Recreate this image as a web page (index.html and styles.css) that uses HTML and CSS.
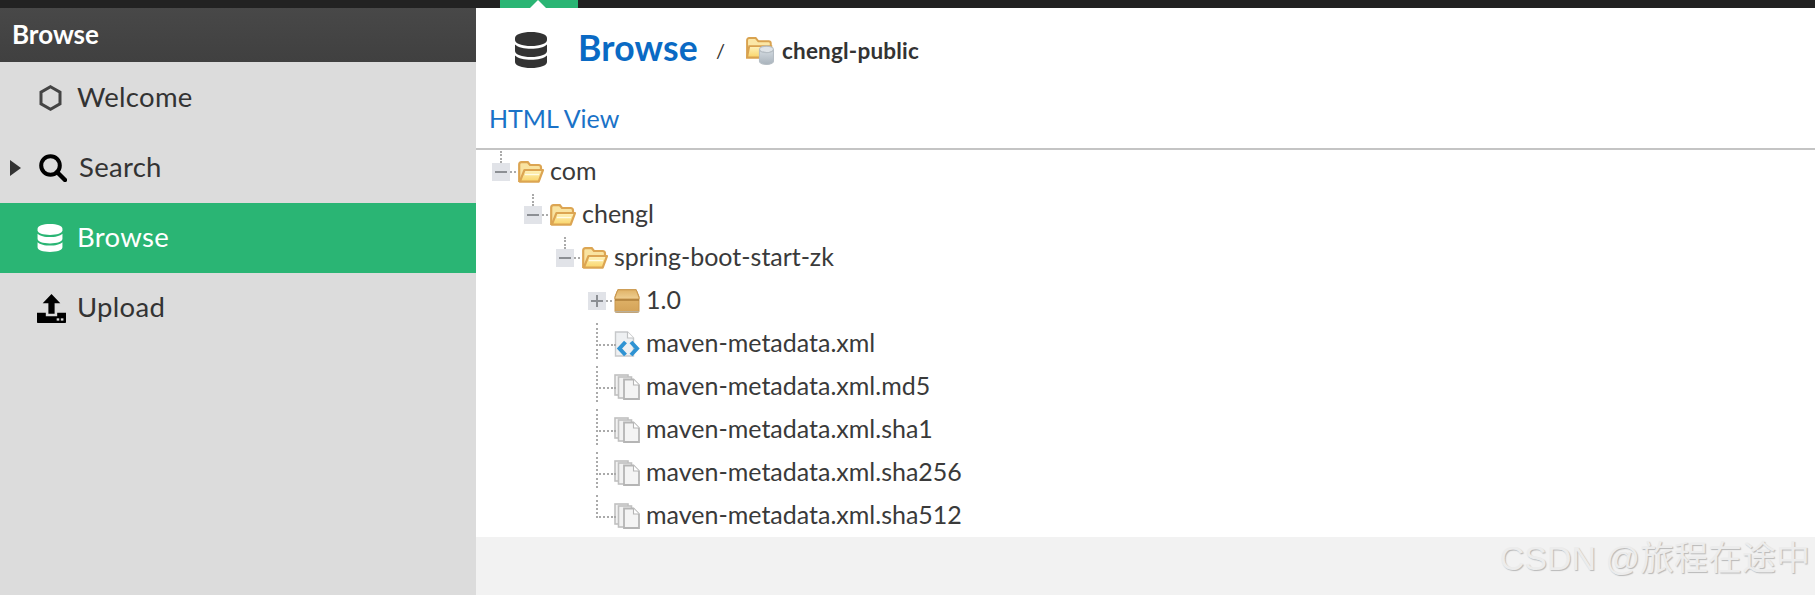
FILE: index.html
```html
<!DOCTYPE html>
<html lang="en">
<head>
<meta charset="utf-8">
<title>Browse</title>
<link rel="stylesheet" href="styles.css">
</head>
<body>
<svg class="defs" aria-hidden="true">
  <defs>
    <linearGradient id="gFolder" x1="0" y1="0" x2="0" y2="1"><stop offset="0" stop-color="#fff3bd"/><stop offset="1" stop-color="#f9d468"/></linearGradient>
    <linearGradient id="gBox" x1="0" y1="0" x2="0" y2="1"><stop offset="0" stop-color="#e6bb72"/><stop offset="1" stop-color="#d3a257"/></linearGradient>
    <linearGradient id="gLid" x1="0" y1="0" x2="0" y2="1"><stop offset="0" stop-color="#e0b367"/><stop offset="1" stop-color="#efcf93"/></linearGradient>
    <linearGradient id="gDb" x1="0" y1="0" x2="0" y2="1"><stop offset="0" stop-color="#d5dce2"/><stop offset="1" stop-color="#a9b3bc"/></linearGradient>
    <symbol id="i-db" viewBox="0 0 32 36">
      <path d="M16 0C7 0 0 2.400 0 6v2c0 3.600 7 6 16 6s16-2.400 16-6V6c0-3.600-7-6-16-6z"/>
      <path d="M0 12.500V19c0 3.600 7 6 16 6s16-2.400 16-6v-6.500c-3 3-9.500 4.300-16 4.300S3 15.500 0 12.500z"/>
      <path d="M0 23.500V30c0 3.600 7 6 16 6s16-2.400 16-6v-6.500c-3 3-9.500 4.300-16 4.300S3 26.500 0 23.500z"/>
    </symbol>
    <symbol id="i-open" viewBox="0 0 26 22">
      <path d="M1.200 20V3.500C1.200 2 2 1.200 3.500 1.200h6.300L12 4h8.500C22 4 23 5 23 6.500V9H8L4 20z" fill="#f9e3a0" stroke="#dca552" stroke-width="2.200"/>
      <path d="M1.800 20.700 6.500 9H25l-4.300 11.700z" fill="url(#gFolder)" stroke="#dca552" stroke-width="2.200" stroke-linejoin="round"/>
      <path d="M7 13.500h14" stroke="#fffbe6" stroke-width="1.400"/>
    </symbol>
    <symbol id="i-box" viewBox="0 0 26 24">
      <path d="M1 7.500 3.800.8h18.400L25 7.500V22c0 .8-.6 1.500-1.500 1.500h-21C1.600 23.500 1 22.800 1 22z" fill="url(#gBox)" stroke="#c9974e"/>
      <path d="M3.800.8h18.400L25 8.500V10H1V8.500z" fill="url(#gLid)" stroke="#c9974e"/>
      <path d="M1 11h24" stroke="#a97a36" stroke-width="1.400"/>
      <path d="M1 22.800h24" stroke="#b9b0a0" stroke-width="1.400"/>
    </symbol>
    <symbol id="i-xml" viewBox="0 0 26 26">
      <path d="M1.500 1h12l6 6v18h-18z" fill="#eef0f2" stroke="#c6c8ca" stroke-width="1.400"/>
      <path d="M13.500 1v6h6" fill="#fff" stroke="#bfc1c3" stroke-width="1.200"/>
      <path d="M11.500 11 5.500 17.500l6 6.500M17 11l6 6.500-6 6.500" fill="none" stroke="#2f93d3" stroke-width="4"/>
    </symbol>
    <symbol id="i-files" viewBox="0 0 26 26">
      <rect x="1" y="1" width="13" height="20" fill="#f2f2f2" stroke="#c0c0c0" stroke-width="1.600"/>
      <rect x="4.500" y="3" width="13" height="21" fill="#f2f2f2" stroke="#c0c0c0" stroke-width="1.600"/>
      <path d="M10 5.500h9.500l5.500 5.500v14H10z" fill="#f4f4f4" stroke="#b5b5b5" stroke-width="1.800"/>
      <path d="M19.500 5.500V11H25" fill="#fff" stroke="#b5b5b5" stroke-width="1.100"/>
    </symbol>
  </defs>
</svg>

<div class="topbar"><div class="toptab"></div></div>

<div class="layout">
  <aside class="sidebar">
    <div class="side-title">Browse</div>
    <nav class="menu">
      <a class="menu-item item-welcome">
        <svg class="icon-hex" viewBox="0 0 23 26"><path d="M11.500 1.800 21 7.200v11.600l-9.500 5.400L2 18.800V7.200z" fill="none" stroke="#444" stroke-width="3"/></svg>
        <span class="menu-label">Welcome</span>
      </a>
      <a class="menu-item item-search">
        <span class="caret"></span>
        <svg class="icon-search" viewBox="0 0 28 28"><circle cx="11.500" cy="11.500" r="9.300" fill="none" stroke="#000" stroke-width="4"/><path d="m18 18 8 8" stroke="#000" stroke-width="4.400" stroke-linecap="round"/></svg>
        <span class="menu-label">Search</span>
      </a>
      <a class="menu-item item-browse active">
        <svg class="icon-db"><use href="#i-db"/></svg>
        <span class="menu-label">Browse</span>
      </a>
      <a class="menu-item item-upload">
        <svg class="icon-upload" viewBox="0 0 28 28"><path d="M14 0 22.500 9H17v10h-6V9H5.500z"/><path d="M0 18h8.500v3.500h11V18H28v9c0 .6-.4 1-1 1H1c-.6 0-1-.4-1-1z"/><rect x="19" y="23.500" width="2.500" height="2.200" fill="#ddd"/><rect x="23" y="23.500" width="2.500" height="2.200" fill="#ddd"/></svg>
        <span class="menu-label">Upload</span>
      </a>
    </nav>
  </aside>

  <main class="content">
    <div class="panel">
      <header class="page-head">
        <svg class="head-db"><use href="#i-db"/></svg>
        <h1 class="head-title">Browse</h1>
        <span class="crumb-sep">/</span>
        <svg class="crumb-icon" viewBox="0 0 26 26">
          <path d="M1 19V3c0-1 .8-2 2-2h6l2.500 3H21c1 0 2 1 2 2v13z" fill="#fbe7a6" stroke="#d9a24f" stroke-width="1.800"/>
          <path d="M1 19 3 8.500h20.500V19z" fill="url(#gFolder)" stroke="#d9a24f" stroke-width="1.800"/>
          <ellipse cx="19" cy="11.500" rx="6.500" ry="3" fill="#dfe4e8" stroke="#b5bdc4"/>
          <path d="M12.500 11.500v11c0 1.700 3 3 6.500 3s6.500-1.300 6.500-3v-11c0 1.700-3 3-6.500 3s-6.500-1.300-6.500-3z" fill="url(#gDb)" stroke="#b5bdc4"/>
        </svg>
        <span class="crumb-name">chengl-public</span>
      </header>
      <div class="view-bar"><a class="html-view">HTML View</a></div>
      <ul class="tree">
        <li class="node depth-0"><span class="expander minus"></span><svg class="node-icon"><use href="#i-open"/></svg><span class="node-label">com</span></li>
        <li class="node depth-1"><span class="expander minus"></span><svg class="node-icon"><use href="#i-open"/></svg><span class="node-label">chengl</span></li>
        <li class="node depth-2"><span class="expander minus"></span><svg class="node-icon"><use href="#i-open"/></svg><span class="node-label">spring-boot-start-zk</span></li>
        <li class="node depth-3"><span class="expander plus"></span><svg class="node-icon"><use href="#i-box"/></svg><span class="node-label">1.0</span></li>
        <li class="node depth-3"><span class="branch"></span><svg class="node-icon"><use href="#i-xml"/></svg><span class="node-label">maven-metadata.xml</span></li>
        <li class="node depth-3"><span class="branch"></span><svg class="node-icon"><use href="#i-files"/></svg><span class="node-label">maven-metadata.xml.md5</span></li>
        <li class="node depth-3"><span class="branch"></span><svg class="node-icon"><use href="#i-files"/></svg><span class="node-label">maven-metadata.xml.sha1</span></li>
        <li class="node depth-3"><span class="branch"></span><svg class="node-icon"><use href="#i-files"/></svg><span class="node-label">maven-metadata.xml.sha256</span></li>
        <li class="node depth-3"><span class="branch branch-last"></span><svg class="node-icon"><use href="#i-files"/></svg><span class="node-label">maven-metadata.xml.sha512</span></li>
      </ul>
    </div>
    <div class="page-foot"></div>
  </main>
</div>
<div class="watermark">CSDN @旅程在途中</div>
</body>
</html>
```

FILE: styles.css
```css
* { box-sizing: border-box; }
html, body { margin: 0; height: 100%; }
body {
  width: 1815px;
  height: 595px;
  overflow: hidden;
  position: relative;
  display: flex;
  flex-direction: column;
  font-family: "Lato", "Liberation Sans", sans-serif;
  color: #333;
  background: #fff;
}
.defs { width: 0; height: 0; display: block; overflow: hidden; }

.topbar { height: 8px; flex: none; background: #222; padding-left: 500px; }
.toptab { width: 78px; height: 8px; background: #2ab574; position: relative; }
.toptab::after {
  content: "";
  position: absolute;
  left: 30px;
  bottom: 0;
  border: 8px solid transparent;
  border-top: 0;
  border-bottom-color: #fff;
}

.layout { flex: 1; display: flex; min-height: 0; }

.sidebar { width: 476px; flex: none; background: #dcdcdc; }
.side-title {
  height: 54px;
  padding: 0 0 3px 12px;
  display: flex;
  align-items: center;
  background: linear-gradient(#484848, #404040);
  color: #fff;
  font-size: 26px;
  font-weight: 700;
}
.menu-item {
  height: 70px;
  display: flex;
  align-items: center;
  font-size: 27.500px;
  letter-spacing: .3px;
  color: #333;
}
.menu-label { padding-bottom: 3px; }
.item-welcome { height: 71px; padding-left: 39px; gap: 15px; }
.item-search { padding-left: 10px; }
.item-browse { padding-left: 37px; gap: 14px; }
.item-upload { padding-left: 37px; gap: 11px; }
.icon-hex { width: 23px; height: 26px; flex: none; }
.icon-search { width: 28px; height: 28px; margin-left: 18px; margin-right: 12px; flex: none; }
.icon-db { width: 26px; height: 28px; flex: none; fill: #fff; }
.icon-upload { width: 29px; height: 29px; flex: none; }
.caret {
  width: 0; height: 0; flex: none;
  border-left: 11px solid #333;
  border-top: 8px solid transparent;
  border-bottom: 8px solid transparent;
}
.active { background: #2ab574; color: #fff; }

.content { flex: 1; display: flex; flex-direction: column; min-width: 0; }
.panel { height: 529px; flex: none; background: #fff; }
.page-foot { flex: 1; background: #f2f2f2; }

.page-head { height: 84px; display: flex; align-items: center; padding: 0 0 6px 39px; }
.head-db { width: 32px; height: 36px; margin-top: 6px; flex: none; fill: #333; }
.head-title {
  margin: 0 0 0 31px;
  font-size: 35.500px;
  letter-spacing: .2px;
  font-weight: 700;
  color: #0a6ac4;
}
.crumb-sep { margin: 6px 0 0 18px; font-size: 20px; color: #333; }
.crumb-icon { width: 28px; height: 28px; margin: 8px 0 0 21px; flex: none; }
.crumb-name { margin: 6px 0 0 8px; font-size: 22.500px; letter-spacing: .2px; font-weight: 700; color: #333; }

.view-bar {
  height: 58px;
  padding: 11px 0 0 13px;
  border-bottom: 2px solid #c4c4c4;
  font-size: 25px;
  color: #1a72c7;
}

.tree { list-style: none; margin: 0; padding: 0; font-size: 25px; color: #3a3a3a; }
.node { height: 43px; display: flex; align-items: center; }
.node-label { padding-bottom: 3px; }
.depth-0 { padding-left: 16px; }
.depth-1 { padding-left: 48px; }
.depth-2 { padding-left: 80px; }
.depth-3 { padding-left: 112px; }
.node-icon { width: 26px; height: 26px; margin: 0 6px 0 8px; flex: none; }

.expander, .branch { position: relative; width: 18px; height: 18px; flex: none; }
.expander {
  background-color: #e1e3e8;
  background-repeat: no-repeat;
  background-position: center;
  background-image: linear-gradient(#8c8f94, #8c8f94);
  background-size: 12px 2px;
}
.plus {
  background-image: linear-gradient(#8c8f94, #8c8f94), linear-gradient(#8c8f94, #8c8f94);
  background-size: 12px 2px, 2px 12px;
}

/* dotted tree guides hanging over the row */
.expander::before {
  content: "";
  position: absolute;
  left: 8px; top: -12px; height: 12px;
  border-left: 2px dotted #aaa;
}
.plus::before { height: 44px; top: -13px; z-index: -1; }
.expander::after {
  content: "";
  position: absolute;
  left: 100%; top: 8px; width: 6px;
  border-top: 2px dotted #aaa;
}
.branch::before {
  content: "";
  position: absolute;
  left: 8px; top: -12px; width: 18px; height: 21px;
  border-left: 2px dotted #aaa;
  border-bottom: 2px dotted #aaa;
}
.branch::after {
  content: "";
  position: absolute;
  left: 8px; top: 9px; height: 15px;
  border-left: 2px dotted #aaa;
}
.branch-last::after { display: none; }

.watermark {
  position: absolute;
  right: 5px;
  bottom: 15px;
  font-family: "Liberation Sans", "Noto Sans CJK SC", sans-serif;
  font-size: 34px;
  color: #ececec;
  text-shadow: 1px 1px 1px #b8b8b8;
  white-space: nowrap;
}
```
